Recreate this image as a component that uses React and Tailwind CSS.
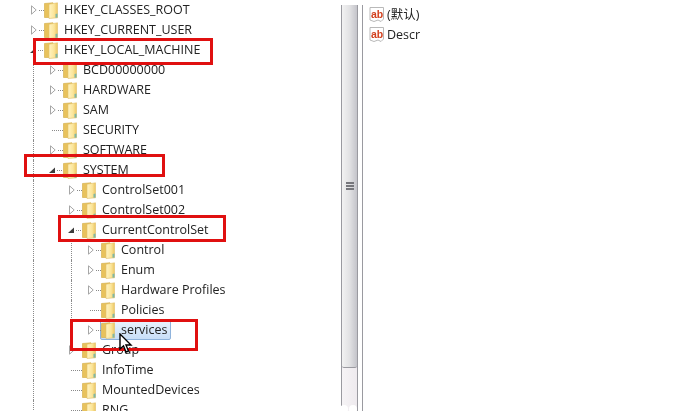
import React from 'react';

// guides: x columns with a dotted line, arrow: none / open / closed
const rows = [
  { label: 'HKEY_CLASSES_ROOT', guides: [], arrow: 'closed' },
  { label: 'HKEY_CURRENT_USER', guides: [], arrow: 'closed' },
  { label: 'HKEY_LOCAL_MACHINE', guides: [], arrow: 'open' },
  { label: 'BCD00000000', guides: [1], arrow: 'closed' },
  { label: 'HARDWARE', guides: [1], arrow: 'closed' },
  { label: 'SAM', guides: [1], arrow: 'closed' },
  { label: 'SECURITY', guides: [1], arrow: 'none' },
  { label: 'SOFTWARE', guides: [1], arrow: 'closed' },
  { label: 'SYSTEM', guides: [1], arrow: 'open' },
  { label: 'ControlSet001', guides: [1, 0], arrow: 'closed' },
  { label: 'ControlSet002', guides: [1, 0], arrow: 'closed' },
  { label: 'CurrentControlSet', guides: [1, 0], arrow: 'open' },
  { label: 'Control', guides: [1, 0, 1], arrow: 'closed' },
  { label: 'Enum', guides: [1, 0, 1], arrow: 'closed' },
  { label: 'Hardware Profiles', guides: [1, 0, 1], arrow: 'closed' },
  { label: 'Policies', guides: [1, 0, 1], arrow: 'none' },
  { label: 'services', guides: [1, 0, 1], arrow: 'closed', selected: true },
  { label: 'Group', guides: [1, 0], arrow: 'closed' },
  { label: 'InfoTime', guides: [1, 0], arrow: 'none' },
  { label: 'MountedDevices', guides: [1, 0], arrow: 'none' },
  { label: 'RNG', guides: [1, 0], arrow: 'none' },
];

function Folder() {
  return (
    <svg width="14" height="17" viewBox="0 0 14 17" className="shrink-0">
      <defs>
        <linearGradient id="flap" x1="0" y1="0" x2="1" y2="0">
          <stop offset="0" stopColor="#fff3c0" />
          <stop offset="0.6" stopColor="#fbe59a" />
          <stop offset="1" stopColor="#ecc662" />
        </linearGradient>
      </defs>
      <path d="M0.5 1.5 L9 0.8 L9 15.5 L0.5 15.5 Z" fill="#e8c25c" stroke="#d6b152" strokeWidth="0.7" />
      <path d="M5 2.2 L13.5 0.8 L13.5 15.8 L5 16.5 Z" fill="url(#flap)" stroke="#e0c06a" strokeWidth="0.6" />
      <path d="M11.5 12 L13.5 11.5 L13.5 15.5 L11.5 15.7 Z" fill="#7fb7a6" />
    </svg>
  );
}

function Arrow({ type }) {
  if (type === 'closed') {
    return (
      <svg width="6" height="10" viewBox="0 0 6 10" className="shrink-0 -ml-[2px]">
        <path d="M0.5 0.8 L5.2 5 L0.5 9.2 Z" fill="#fff" stroke="#a6a6a6" strokeWidth="1" />
      </svg>
    );
  }
  return (
    <svg width="6" height="10" viewBox="0 0 6 10" className="shrink-0 -ml-[3px]">
      <path d="M0 8 L6 2.5 L6 8 Z" fill="#3c3c3c" />
    </svg>
  );
}

function TreeRow({ row }) {
  return (
    <div className="flex h-5 items-stretch">
      {row.guides.map((on, i) => (
        <div key={i} className={on ? 'w-[19px] border-l border-dotted border-[#8a8a8a]' : 'w-[19px]'} />
      ))}
      <div className="relative flex w-[11px] items-center">
        {row.arrow === 'none' ? (
          <div className="w-[11px] border-t border-dotted border-[#8a8a8a]" />
        ) : (
          <>
            <Arrow type={row.arrow} />
            <div className="ml-[2px] w-[5px] border-t border-dotted border-[#8a8a8a]" />
          </>
        )}
      </div>
      <div
        className={
          row.selected
            ? '-ml-[1px] flex h-5 items-center rounded-[2px] border border-[#8fb3dc] bg-gradient-to-b from-[#eaf3fd] to-[#c8def7] pr-[3px]'
            : 'flex items-center'
        }
      >
        <Folder />
        <span className="ml-[6px] whitespace-nowrap text-[12.5px] text-[#222]">{row.label}</span>
      </div>
    </div>
  );
}

function StringIcon() {
  return (
    <svg width="16" height="17" viewBox="0 0 16 17" className="shrink-0">
      <path d="M1 1.5 H14.5 V13 L12 15.5 L9 14 L5 15.5 L1 14 Z" fill="#fff" stroke="#b9b9b9" />
      <text x="2" y="11.5" fontSize="10.5" fontWeight="700" fill="#d2401e" fontFamily="Liberation Sans, sans-serif">ab</text>
    </svg>
  );
}

export default function App() {
  return (
    <div className="relative flex h-[411px] w-[686px] overflow-hidden bg-white font-['Open_Sans',sans-serif] blur-[0.3px]">
      {/* Tree pane */}
      <div className="w-[341px] shrink-0 pl-[33px]">
        {rows.map((row) => (
          <TreeRow key={row.label} row={row} />
        ))}
      </div>

      {/* Scrollbar */}
      <div className="mt-[5px] flex w-[17px] shrink-0 flex-col border-x border-[#9a9aa0] bg-gradient-to-r from-[#f6f4f6] to-[#eeeaee]">
        <div className="flex h-[363px] items-center justify-center rounded-b-[2px] border-b border-[#9a9aa0] bg-gradient-to-r from-[#f2f2f2] via-[#e2e2e4] to-[#c4c4ca]">
          <div className="flex w-[8px] flex-col gap-[1px]">
            <div className="h-[2px] bg-[#77777c]" />
            <div className="h-[2px] bg-[#77777c]" />
            <div className="h-[2px] bg-[#77777c]" />
          </div>
        </div>
      </div>

      {/* Splitter */}
      <div className="mt-[5px] w-[5px] shrink-0 border-r border-[#9a9aa0]" />

      {/* List pane */}
      <div className="flex w-[57px] shrink-0 flex-col gap-[3px] overflow-hidden pl-[6px] pt-[6px]">
        <div className="flex h-[17px] items-center gap-[2px] whitespace-nowrap text-[12.5px] text-[#222]">
          <StringIcon />
          <span className="pt-[2px] font-['Open_Sans','Noto_Sans_CJK_SC',sans-serif]">(默认)</span>
        </div>
        <div className="flex h-[17px] items-center gap-[2px] whitespace-nowrap text-[12.5px] text-[#222]">
          <StringIcon />
          <span className="pt-[2px]">Description</span>
        </div>
      </div>

      {/* Red annotations */}
      <div className="absolute left-[33px] top-[38px] h-[27px] w-[180px] border-[3px] border-[#e01010]" />
      <div className="absolute left-[24px] top-[154px] h-[23px] w-[141px] border-[3px] border-[#e01010]" />
      <div className="absolute left-[58px] top-[215px] h-[27px] w-[168px] border-[3px] border-[#e01010]" />
      <div className="absolute left-[70px] top-[319px] h-[32px] w-[128px] border-[3px] border-[#e01010]" />

      {/* Mouse cursor */}
      <svg width="14" height="22" viewBox="0 0 14 22" className="absolute left-[119px] top-[333px]">
        <path d="M1 1 L1 16 L4.5 13 L7 19 L9.5 18 L7 12 L12 12 Z" fill="#fff" stroke="#000" strokeWidth="1.4" />
      </svg>

      {/* White smudge over the scrollbar foot */}
      <svg width="30" height="12" viewBox="0 0 30 12" className="absolute left-[332px] top-[400px]">
        <circle cx="4" cy="11" r="3" fill="#fff" />
        <circle cx="12" cy="9" r="4" fill="#fff" />
        <circle cx="21" cy="9" r="4" fill="#fff" />
      </svg>
    </div>
  );
}
